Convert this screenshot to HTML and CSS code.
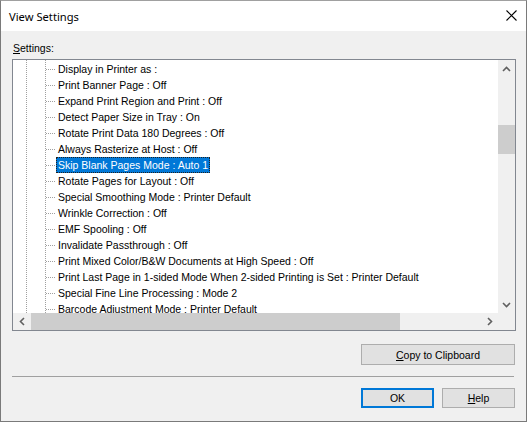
FILE: index.html
```html
<!DOCTYPE html>
<html>
<head>
<meta charset="utf-8">
<link rel="stylesheet" href="styles.css">
</head>
<body>
<div class="window">
  <div class="titlebar">
    <span class="title">View Settings</span>
    <svg class="close" width="11" height="11" viewBox="0 0 11 11"><path d="M0.5 0.5 L10.5 10.5 M10.5 0.5 L0.5 10.5" stroke="#000" stroke-width="1.1" fill="none"/></svg>
  </div>
  <div class="body">
    <div class="label"><u>S</u>ettings:</div>
    <div class="listbox">
      <div class="main">
        <div class="tree">
          <div class="row"><span class="text">Display in Printer as :</span></div>
          <div class="row"><span class="text">Print Banner Page : Off</span></div>
          <div class="row"><span class="text">Expand Print Region and Print : Off</span></div>
          <div class="row"><span class="text">Detect Paper Size in Tray : On</span></div>
          <div class="row"><span class="text">Rotate Print Data 180 Degrees : Off</span></div>
          <div class="row"><span class="text">Always Rasterize at Host : Off</span></div>
          <div class="row"><span class="text selected">Skip Blank Pages Mode : Auto 1</span></div>
          <div class="row"><span class="text">Rotate Pages for Layout : Off</span></div>
          <div class="row"><span class="text">Special Smoothing Mode : Printer Default</span></div>
          <div class="row"><span class="text">Wrinkle Correction : Off</span></div>
          <div class="row"><span class="text">EMF Spooling : Off</span></div>
          <div class="row"><span class="text">Invalidate Passthrough : Off</span></div>
          <div class="row"><span class="text">Print Mixed Color/B&amp;W Documents at High Speed : Off</span></div>
          <div class="row"><span class="text">Print Last Page in 1-sided Mode When 2-sided Printing is Set : Printer Default</span></div>
          <div class="row"><span class="text">Special Fine Line Processing : Mode 2</span></div>
          <div class="row"><span class="text">Barcode Adjustment Mode : Printer Default</span></div>
        </div>
        <div class="vscroll">
          <div class="arrow"><svg width="9" height="6" viewBox="0 0 9 6"><path d="M1 5 L4.5 1.5 L8 5" stroke="#606060" stroke-width="1.6" fill="none"/></svg></div>
          <div class="vtrack"><div class="vthumb"></div></div>
          <div class="arrow"><svg width="9" height="6" viewBox="0 0 9 6"><path d="M1 1 L4.5 4.5 L8 1" stroke="#606060" stroke-width="1.6" fill="none"/></svg></div>
        </div>
      </div>
      <div class="hbar">
        <div class="hscroll">
          <div class="arrow"><svg width="6" height="9" viewBox="0 0 6 9"><path d="M5 1 L1.5 4.5 L5 8" stroke="#606060" stroke-width="1.6" fill="none"/></svg></div>
          <div class="htrack"><div class="hthumb"></div></div>
          <div class="arrow"><svg width="6" height="9" viewBox="0 0 6 9"><path d="M1 1 L4.5 4.5 L1 8" stroke="#606060" stroke-width="1.6" fill="none"/></svg></div>
        </div>
        <div class="corner"></div>
      </div>
    </div>
    <div class="copyrow">
      <button class="btn copy"><u>C</u>opy to Clipboard</button>
    </div>
    <div class="sep"></div>
    <div class="btnrow">
      <button class="btn ok">OK</button>
      <button class="btn help"><u>H</u>elp</button>
    </div>
  </div>
</div>
</body>
</html>
```
FILE: styles.css
```css
html, body {
  margin: 0;
  padding: 0;
  background: #ffffff;
}
.window {
  width: 527px;
  height: 422px;
  box-sizing: border-box;
  border: 1px solid #7a7a7a;
  border-top-color: #a0a0a0;
  background: #f0f0f0;
  display: flex;
  flex-direction: column;
  font-family: "Liberation Sans", Arial, sans-serif;
  font-size: 10.5px;
  color: #000;
  overflow: hidden;
}
.titlebar {
  height: 30px;
  background: #ffffff;
  display: flex;
  align-items: center;
  justify-content: space-between;
  padding: 0 9px 0 8px;
  flex: none;
}
.title {
  font-family: "Noto Sans", "Open Sans", sans-serif;
  font-size: 11.2px;
  padding-bottom: 0;
  padding-top: 1px;
}
.close {
  margin-top: -1px;
}
.body {
  padding: 10px 10px 0 11px;
  display: flex;
  flex-direction: column;
}
.label {
  height: 18px;
  line-height: 15px;
  padding-left: 1px;
}
.listbox {
  width: 504px;
  height: 272px;
  box-sizing: border-box;
  border: 1px solid #828790;
  background: #ffffff;
  display: flex;
  flex-direction: column;
}
.main {
  display: flex;
  height: 253px;
}
.tree {
  flex: 1;
  overflow: hidden;
  padding-top: 1px;
  background-image:
    repeating-linear-gradient(to bottom, #a0a0a0 0 1px, transparent 1px 2px),
    repeating-linear-gradient(to bottom, #a0a0a0 0 1px, transparent 1px 2px);
  background-size: 1px 100%, 1px 100%;
  background-position: 13px 0, 32px 0;
  background-repeat: no-repeat;
}
.row {
  height: 16px;
  display: flex;
  align-items: center;
  padding-left: 33px;
  white-space: nowrap;
}
.row::before {
  content: "";
  width: 9px;
  height: 1px;
  flex: none;
  background-image: repeating-linear-gradient(to right, #a0a0a0 0 1px, transparent 1px 2px);
}
.text {
  margin-left: 1px;
  padding: 0 2px;
  height: 16px;
  line-height: 16px;
  box-sizing: border-box;
}
.text.selected {
  background: #0078d7;
  color: #ffffff;
  outline: 1px dotted #202020;
  outline-offset: -1px;
}
.vscroll {
  width: 17px;
  background: #f0f0f0;
  display: flex;
  flex-direction: column;
  flex: none;
}
.arrow {
  width: 17px;
  height: 17px;
  display: flex;
  align-items: center;
  justify-content: center;
  flex: none;
}
.vtrack {
  flex: 1;
  padding-top: 48px;
}
.vthumb {
  width: 17px;
  height: 29px;
  background: #cdcdcd;
}
.hbar {
  display: flex;
  height: 17px;
}
.hscroll {
  flex: 1;
  display: flex;
  background: #f0f0f0;
}
.htrack {
  flex: 1;
  padding-left: 1px;
}
.hthumb {
  width: 369px;
  height: 17px;
  background: #cdcdcd;
}
.corner {
  width: 17px;
  background: #f0f0f0;
}
.copyrow {
  display: flex;
  justify-content: flex-end;
  padding: 13px 1px 0 0;
}
.btn {
  font-family: "Liberation Sans", Arial, sans-serif;
  font-size: 10.5px;
  color: #000;
  background: #e1e1e1;
  border: 1px solid #adadad;
  margin: 0;
  padding: 0;
  box-sizing: border-box;
}
.copy {
  width: 154px;
  height: 21px;
}
.sep {
  height: 1px;
  width: 502px;
  background: #a0a0a0;
  margin-top: 11px;
}
.btnrow {
  display: flex;
  justify-content: flex-end;
  gap: 8px;
  padding: 11px 1px 0 0;
}
.ok {
  width: 73px;
  height: 20px;
  border: 2px solid #0078d7;
}
.help {
  width: 73px;
  height: 20px;
}
```
